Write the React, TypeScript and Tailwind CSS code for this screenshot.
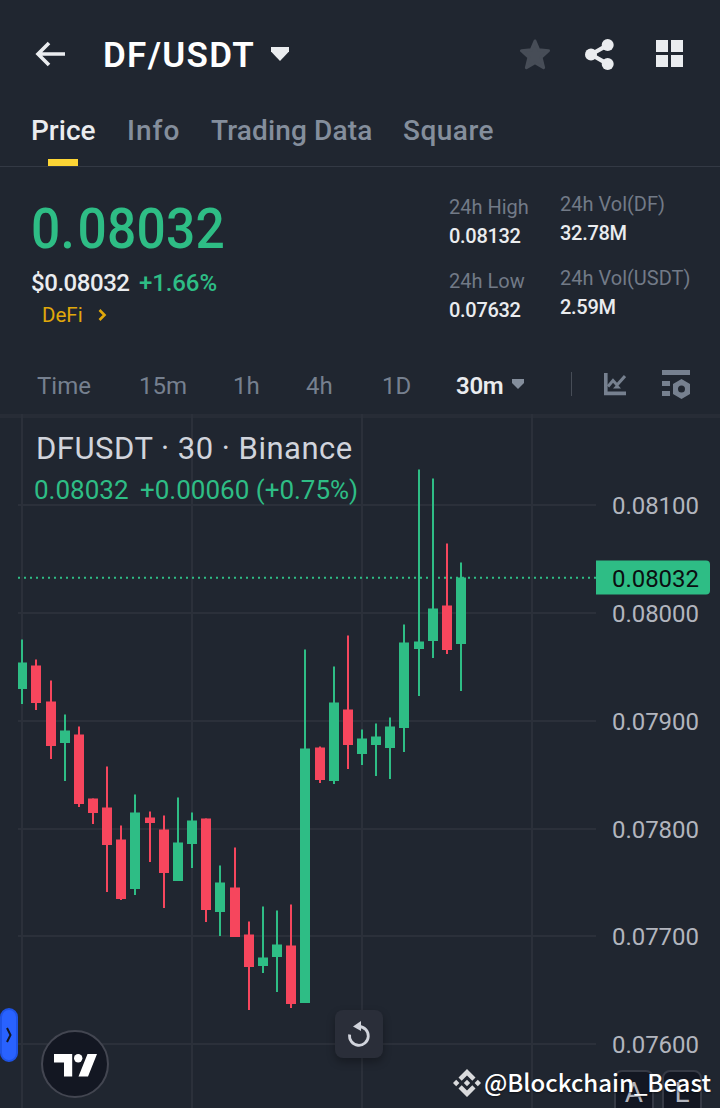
import React from "react";

const GREEN = "#2ebd85";
const RED = "#f6465d";

type Candle = [x: number, up: 0 | 1, top: number, bottom: number, high: number, low: number];

const candles: Candle[] = [
  [17, 1, 662.5, 689, 639.5, 704],
  [31, 0, 665.5, 703, 659.5, 710],
  [46, 0, 701.5, 746, 680.5, 759],
  [60, 1, 730.5, 743, 714.5, 781],
  [74, 0, 734.5, 804, 726.5, 807],
  [88, 0, 798.5, 813, 798.5, 824],
  [102, 0, 807.5, 845, 766.5, 892],
  [116, 0, 839.5, 899, 825.5, 900],
  [130, 1, 812.5, 889, 794.5, 895],
  [145, 0, 817.5, 823, 811.5, 862],
  [159, 0, 829.5, 873, 815.5, 908],
  [173, 1, 842.5, 881, 797.5, 881],
  [187, 1, 820.5, 844, 812.5, 868],
  [201, 0, 818.5, 910, 818.5, 922],
  [215, 1, 882.5, 912, 865.5, 936],
  [230, 0, 887.5, 937, 847.5, 937],
  [244, 0, 934.5, 967, 921.5, 1010],
  [258, 1, 957.5, 966, 906.5, 973],
  [272, 1, 944.5, 957, 910.5, 992],
  [286, 0, 945.5, 1004, 904.5, 1008],
  [300, 1, 748.5, 1003, 649.5, 1003],
  [315, 0, 747.5, 780, 746.5, 783],
  [329, 1, 702.5, 781, 666.5, 784],
  [343, 0, 709.5, 745, 635.5, 769],
  [357, 1, 738.5, 754, 729.5, 765],
  [371, 1, 736.5, 745, 723.5, 776],
  [385, 1, 726.5, 748, 717.5, 779],
  [399, 1, 642.5, 728, 624.5, 752],
  [414, 1, 641.5, 649, 469.5, 696],
  [428, 1, 608.5, 641, 478.5, 658],
  [442, 0, 605.5, 650, 543.5, 654],
  [456, 1, 577.5, 644, 562.5, 691],
];

const priceLines = [
  { y: 505, label: "0.08100" },
  { y: 613, label: "0.08000" },
  { y: 721, label: "0.07900" },
  { y: 829, label: "0.07800" },
  { y: 936, label: "0.07700" },
  { y: 1044, label: "0.07600" },
];

const timeLines = [22, 192, 362, 532];

function Header() {
  return (
    <header className="flex h-[108px] shrink-0 items-center pl-[35px] pr-9">
      <svg width="31" height="26" viewBox="0 0 31 26" fill="none" stroke="#eaecef" strokeWidth="3.6">
        <path d="M30 13H3M14 2L3 13l11 11" />
      </svg>
      <h1 className="ml-[37px] w-[155px] whitespace-nowrap pt-1 text-[35px] font-semibold leading-[40px] tracking-[1.3px] text-white">
        DF/USDT
      </h1>
      <svg className="ml-[13px]" width="18" height="14" viewBox="0 0 18 14" fill="#eaecef">
        <path d="M0 0h18v4.500L9 14 0 4.500z" />
      </svg>
      <div className="ml-auto flex items-center">
        <svg width="30" height="31" viewBox="0 0 30 31" fill="#474d57" stroke="#474d57" strokeWidth="3" strokeLinejoin="round">
          <path d="M15 2l3.700 8.800 9.800.9-7.400 6.700 2.500 10.300L15 23.800l-8.600 4.900 2.500-10.300L1.500 11.700l9.800-.9z" />
        </svg>
        <svg className="ml-[35px]" width="29" height="31" viewBox="0 0 29 31" fill="#eaecef">
          <path d="M6 15.500L22.500 6.200M6 15.500l16.500 9.300" stroke="#eaecef" strokeWidth="4.200" />
          <circle cx="6" cy="15.500" r="6" />
          <circle cx="22.700" cy="6.100" r="6" />
          <circle cx="22.700" cy="24.900" r="6" />
        </svg>
        <svg className="-mt-px ml-[42px] mr-px" width="27" height="27" viewBox="0 0 27 27" fill="#eaecef">
          <path d="M0 0h12v12H0zM15 0h12v12H15zM0 15h12v12H0zM15 15h12v12H15z" />
        </svg>
      </div>
    </header>
  );
}

function Tabs() {
  return (
    <nav className="flex h-[59px] shrink-0 border-b border-[#333944] pl-[31px] text-[28px] font-medium leading-[46px] text-[#848e9c]">
      <div className="flex w-[96px] flex-col">
        <span className="text-[#eaecef]">Price</span>
        <span className="ml-[17px] mt-[5px] h-[7px] w-[30px] shrink-0 bg-[#fcd535]" />
      </div>
      <span className="w-[84px] tracking-[1px]">Info</span>
      <span className="w-[192px] whitespace-nowrap tracking-[0.150px]">Trading Data</span>
      <span className="tracking-[0.5px]">Square</span>
    </nav>
  );
}

function Stat({ label, value }: { label: string; value: string }) {
  return (
    <div className="h-[74px] whitespace-nowrap">
      <div className="text-[20px] leading-7 text-[#727a87]">{label}</div>
      <div className="pt-px text-[20px] font-medium leading-7 tracking-[-0.300px] text-[#eaecef]">{value}</div>
    </div>
  );
}

function Summary() {
  return (
    <section className="flex h-[183px] shrink-0 pl-[31px]">
      <div className="w-[418px]">
        <div className="mt-8 h-[60px] origin-left scale-x-[0.920] whitespace-nowrap text-[56px] font-medium leading-[60px] tracking-[0.200px] text-[#2ebd85]">
          0<span className="tracking-[3px]">.</span>08032
        </div>
        <div className="mt-[3px] flex h-[34px] items-center whitespace-nowrap pt-2 text-[24px] font-medium leading-[34px]">
          <span className="w-[108px] tracking-[-0.450px] text-[#eaecef]">$0.08032</span>
          <span className="tracking-[-0.100px] text-[#2ebd85]">+1.66%</span>
        </div>
        <div className="mt-[5px] flex h-7 items-center pl-[11px] text-[20.500px] text-[#e0a80b]">
          <span className="w-[56px]">DeFi</span>
          <svg width="9" height="12" viewBox="0 0 9 12" fill="none" stroke="#e0a80b" strokeWidth="2.600">
            <path d="M1.500 1l5 5-5 5" />
          </svg>
        </div>
      </div>
      <div className="w-[111px] pt-[26px]">
        <Stat label="24h High" value="0.08132" />
        <Stat label="24h Low" value="0.07632" />
      </div>
      <div className="pt-[23px]">
        <Stat label="24h Vol(DF)" value="32.78M" />
        <Stat label="24h Vol(USDT)" value="2.59M" />
      </div>
    </section>
  );
}

function Intervals() {
  return (
    <div className="flex h-16 shrink-0 items-center whitespace-nowrap pl-[37px] pt-2 text-[24px] text-[#76808f]">
      <span className="w-[102px]">Time</span>
      <span className="w-[94px]">15m</span>
      <span className="w-[73px]">1h</span>
      <span className="w-[76px]">4h</span>
      <span className="w-[74px]">1D</span>
      <span className="w-[56px] font-semibold tracking-[-0.300px] text-[#eaecef]">30m</span>
      <svg className="-mt-1" width="12" height="10" viewBox="0 0 12 10" fill="#848e9c">
        <path d="M0 0h12v4L6 10 0 4z" />
      </svg>
      <span className="-mt-1 ml-[47px] h-6 w-px bg-[#474d57]" />
      <svg className="-mt-1 ml-8" width="22" height="23" viewBox="0 0 22 23" fill="none" stroke="#76808f" strokeWidth="3.600">
        <path d="M1.800 0v20.400H22" />
        <path d="M4 13.500l5-6 4 4.500 8-9" strokeWidth="3" />
        <path d="M13 11l4 4.500H9z" fill="#76808f" stroke="none" />
      </svg>
      <svg className="-mt-[3px] ml-9" width="28" height="29" viewBox="0 0 28 29" fill="#76808f">
        <path d="M0 0h28v5H0zM0 11h8v5H0zM0 21h8v5H0z" />
        <path fillRule="evenodd" d="M19.500 9l8.500 5v10l-8.500 5-8.500-5V14zM19.500 15.500a3.500 3.500 0 100 7 3.500 3.500 0 000-7z" />
      </svg>
    </div>
  );
}

function CandleChart() {
  return (
    <svg width="720" height="694" viewBox="0 414 720 694" className="block">
      <rect x="0" y="414" width="720" height="4" fill="#272c36" />
      <g fill="#2b303a">
        {timeLines.map((x) => (
          <rect key={x} x={x - 1} y="414" width="2" height="694" />
        ))}
        {priceLines.map(({ y }) => (
          <rect key={y} x="18" y={y - 1} width="578" height="2" />
        ))}
      </g>
      <line x1="18" x2="596" y1="577.700" y2="577.700" stroke={GREEN} strokeWidth="2" strokeDasharray="2 4" />
      {candles.map(([x, up, top, bottom, high, low]) => {
        const left = Math.max(x, 18);
        return (
          <g key={x} fill={up ? GREEN : RED}>
            <rect x={x + 4} y={high} width="2" height={low - high} />
            <rect x={left} y={top} width={x + 10 - left} height={bottom - top} />
          </g>
        );
      })}
      <path d="M596 560.500h110a4 4 0 014 4v26a4 4 0 01-4 4H596z" fill={GREEN} />
      <g fontSize="24" fill="#b2b5be">
        {priceLines.map(({ y, label }) => (
          <text key={y} x="612" y={y + 9} textLength="87">
            {label}
          </text>
        ))}
        <text x="612" y="587" textLength="87" fill="#0b0e11">
          0.08032
        </text>
      </g>
    </svg>
  );
}

function ScaleButton({ children }: { children: string }) {
  return (
    <div className="h-12 w-10 rounded-lg border-2 border-[#363a45] bg-[#131722] text-center text-[28px] leading-[42px] text-[#b2b5be]">
      {children}
    </div>
  );
}

function Chart() {
  return (
    <section className="relative h-[694px] shrink-0 overflow-hidden">
      <CandleChart />
      <div className="absolute left-[34px] top-[15px] whitespace-nowrap">
        <div className="pl-0.5 text-[31px] leading-10 tracking-[0.500px] text-[#d1d4dc]">DFUSDT · 30 · Binance</div>
        <div className="flex text-[26px] leading-[42px] text-[#2ebd85]">
          <span className="w-[106px]">0.08032</span>
          <span>+0.00060 (+0.75%)</span>
        </div>
      </div>
      <div className="absolute left-0 top-[594px] flex h-[54px] w-[18px] items-center justify-center rounded-[9px] border-2 border-[#1e53e5] bg-[#2962ff]">
        <svg width="6" height="16" viewBox="0 0 6 16" fill="none" stroke="#131722" strokeWidth="2">
          <path d="M1 1l3.500 7L1 15" />
        </svg>
      </div>
      <div className="absolute left-[41px] top-[616px] flex size-[68px] items-center justify-center rounded-full border-2 border-[#434651] bg-[#131722]">
        <svg className="ml-px mt-0.5" width="43" height="23" viewBox="0 0 43 23" fill="#fff">
          <path d="M0 0h18.200v22.500H10V8.500H0zM33.500 0H43l-9 22.500h-9.500z" />
          <circle cx="24.200" cy="4.200" r="4.200" />
        </svg>
      </div>
      <div className="absolute left-[335px] top-[596px] flex size-12 items-center justify-center rounded-lg bg-[#2a2e39] shadow-[0_4px_8px_rgba(0,0,0,0.3)]">
        <svg width="24" height="28" viewBox="0 0 24 28" fill="none" stroke="#d1d4dc" strokeWidth="2.800">
          <path d="M2.600 14.500A9.400 9.400 0 1012 6.500h-1" />
          <path d="M14 1v10L6 6.500z" fill="#d1d4dc" stroke="none" />
        </svg>
      </div>
      <div className="absolute left-[614px] top-[656px] flex gap-2">
        <ScaleButton>A</ScaleButton>
        <ScaleButton>L</ScaleButton>
      </div>
      <div className="absolute left-[453px] top-[652px] flex items-center whitespace-nowrap font-['Noto_Sans_CJK_SC',sans-serif] text-[24px] font-medium leading-9 text-white [text-shadow:0_1px_2px_rgba(0,0,0,0.5)]">
        <svg className="mr-[3px]" width="28" height="28" viewBox="0 0 28 28" fill="#d9dadc">
          <path d="M14 0l8.500 8.500-3.200 3.200L14 6.400l-5.300 5.300-3.200-3.200zM14 28l8.500-8.500-3.200-3.200-5.300 5.300-5.300-5.300-3.200 3.200zM3.200 10.800L6.400 14l-3.200 3.200L0 14zM24.800 10.800L28 14l-3.200 3.200-3.200-3.200zM14 10.800l3.200 3.200-3.200 3.200-3.200-3.200z" />
        </svg>
        <span className="-mt-0.5">@Blockchain_Beast</span>
      </div>
    </section>
  );
}

export default function App() {
  return (
    <main className="flex h-[1108px] w-[720px] flex-col overflow-hidden bg-[#202630] font-['Roboto',sans-serif]">
      <Header />
      <Tabs />
      <Summary />
      <Intervals />
      <Chart />
    </main>
  );
}
